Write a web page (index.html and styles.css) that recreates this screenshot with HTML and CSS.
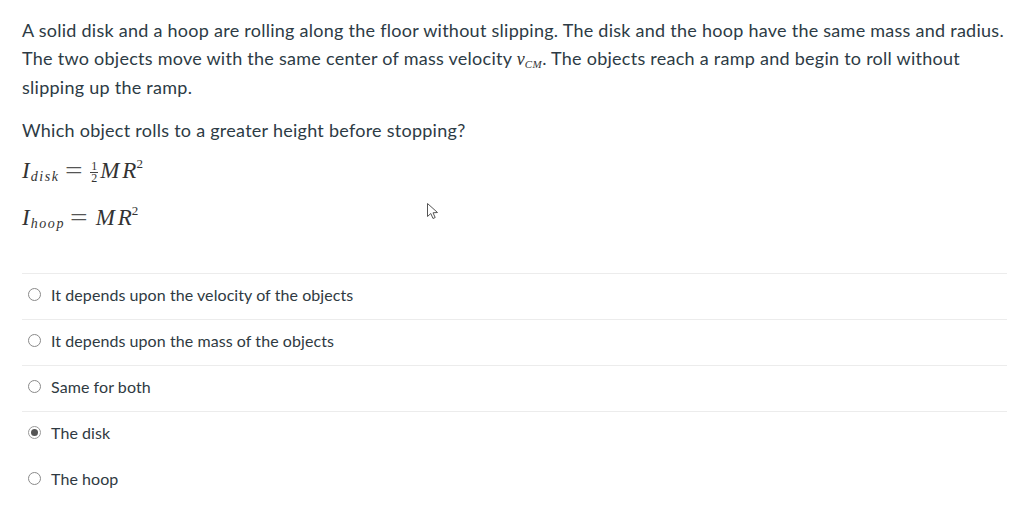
FILE: index.html
```html
<!DOCTYPE html>
<html lang="en">
<head>
<meta charset="utf-8">
<title>Quiz question</title>
<link rel="stylesheet" href="styles.css">
</head>
<body>
<div class="question">
  <div class="question-text">
    <p class="intro">A solid disk and a hoop are rolling along the floor without slipping. The disk and the hoop have the same mass and radius. The two objects move with the same center of mass velocity <span class="math vcm"><i>v</i><sub>CM</sub></span>. The objects reach a ramp and begin to roll without slipping up the ramp.</p>
    <p class="ask">Which object rolls to a greater height before stopping?</p>
    <p class="eq eq-disk"><span class="math"><i class="big">I</i><sub>disk</sub><span class="op">=</span><span class="frac"><span class="num">1</span><span class="den">2</span></span><i class="big mr">MR</i><sup>2</sup></span></p>
    <p class="eq eq-hoop"><span class="math"><i class="big">I</i><sub>hoop</sub><span class="op">=</span><i class="big mr">MR</i><sup>2</sup></span></p>
  </div>
  <div class="answers">
    <label class="answer"><span class="radio"></span><span class="label">It depends upon the velocity of the objects</span></label>
    <label class="answer"><span class="radio"></span><span class="label">It depends upon the mass of the objects</span></label>
    <label class="answer"><span class="radio"></span><span class="label">Same for both</span></label>
    <label class="answer"><span class="radio checked"></span><span class="label">The disk</span></label>
    <label class="answer no-line"><span class="radio"></span><span class="label">The hoop</span></label>
  </div>
</div>
<svg class="cursor" width="15" height="19" viewBox="0 0 15 19"><path d="M1.5 1.5 L1.5 14.5 L4.8 11.5 L7 16.5 L9.2 15.5 L7 10.8 L11.5 10.5 Z" fill="#fff" stroke="#555" stroke-width="1" stroke-linejoin="round"/></svg>
</body>
</html>
```
FILE: styles.css
```css
html, body {
  margin: 0;
  background: #ffffff;
}
body {
  font-family: Lato, "Noto Sans", sans-serif;
  color: #2d3b45;
  position: relative;
  min-height: 514px;
}
.question {
  padding: 16px 16px 0 22px;
}
.question-text p {
  margin: 0;
}
.intro,
.ask {
  font-size: 18px;
  letter-spacing: 0.26px;
  line-height: 28px;
}
.ask {
  margin-top: 15px !important;
}
.math {
  font-family: "Liberation Serif", "DejaVu Serif", serif;
  color: #333;
  white-space: nowrap;
  letter-spacing: 0;
}
.vcm i {
  font-size: 18px;
}
.vcm sub {
  font-size: 11px;
  font-style: italic;
  vertical-align: -3px;
  line-height: 0;
  letter-spacing: 0.5px;
}
.math .big {
  font-size: 23px;
}
.math .mr {
  letter-spacing: 3px;
}
.eq sub {
  font-style: italic;
  font-size: 14px;
  vertical-align: -3px;
  line-height: 0;
  letter-spacing: 1.6px;
  margin-left: 1px;
}
.eq sup {
  font-size: 13px;
  vertical-align: 10px;
  line-height: 0;
  margin-left: -3px;
}
.op {
  color: #555;
  font-size: 24px;
  margin: 0 10px 0 7px;
  display: inline-block;
  transform: scaleX(1.3);
}
.frac {
  display: inline-flex;
  flex-direction: column;
  align-items: center;
  vertical-align: middle;
  font-size: 12px;
  line-height: 11px;
  margin: 0 2px 0 0;
  position: relative;
  top: -1px;
}
.frac .num {
  border-bottom: 1px solid #444;
  padding: 0 1px;
}
.eq {
  height: 28px;
  line-height: 28px;
  display: flex;
  align-items: center;
}
.eq-disk {
  margin-top: 13px !important;
}
.eq-hoop {
  margin-top: 19px !important;
}
.answers {
  margin-top: 41px;
}
.answer {
  display: flex;
  align-items: center;
  gap: 10px;
  height: 45px;
  box-sizing: content-box;
  border-top: 1px solid #ececec;
  padding-left: 6px;
  font-size: 16px;
  letter-spacing: 0.07px;
  color: #2f3a42;
}
.answer .label,
.answer .radio {
  position: relative;
  top: -2px;
}
.answer.no-line {
  border-top-color: transparent;
}
.radio {
  width: 11px;
  height: 11px;
  border: 1.5px solid #8a8a8a;
  border-radius: 50%;
  box-sizing: content-box;
  display: inline-flex;
  align-items: center;
  justify-content: center;
  background: #fff;
  flex: none;
}
.radio.checked {
  border-color: #9a9a9a;
}
.radio.checked::after {
  content: "";
  width: 7px;
  height: 7px;
  border-radius: 50%;
  background: #555;
}
.cursor {
  position: absolute;
  left: 426px;
  top: 202px;
}
```
